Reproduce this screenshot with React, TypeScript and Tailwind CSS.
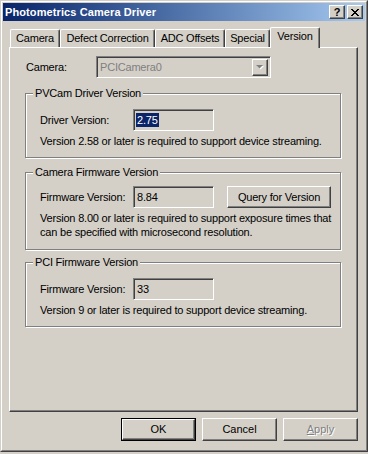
import React from "react";

const font = { fontFamily: '"Liberation Sans", Arial, sans-serif' };

function Sunken({ className = "", children }: { className?: string; children?: React.ReactNode }) {
  return (
    <div
      className={
        "border border-t-[#808080] border-l-[#808080] border-r-white border-b-white shadow-[inset_1px_1px_#404040,inset_-1px_-1px_#d4d0c8] bg-[#d4d0c8] " +
        className
      }
    >
      {children}
    </div>
  );
}

function Raised({ className = "", children }: { className?: string; children?: React.ReactNode }) {
  return (
    <div
      className={
        "border border-t-white border-l-white border-r-[#404040] border-b-[#404040] shadow-[inset_-1px_-1px_#808080] bg-[#d4d0c8] " +
        className
      }
    >
      {children}
    </div>
  );
}

function Group({ title, className = "", children }: { title: string; className?: string; children?: React.ReactNode }) {
  return (
    <div
      className={
        "relative ml-[15px] w-[316px] border border-[#808080] shadow-[inset_1px_1px_#fff,1px_1px_#fff] " + className
      }
    >
      <div className="absolute left-[7px] top-[-7px] px-[2px] bg-[#d4d0c8] leading-[13px] text-[11px] text-black whitespace-nowrap">
        {title}
      </div>
      {children}
    </div>
  );
}

function Tab({ label, w, selected = false }: { label: string; w: number; selected?: boolean }) {
  return (
    <div
      className={
        "flex justify-center bg-[#d4d0c8] border-l border-t border-r border-l-white border-t-white border-r-[#404040] shadow-[inset_-1px_0_#808080] rounded-tl-[2px] rounded-tr-[2px] text-[11px] text-black whitespace-nowrap " +
        (selected ? "relative z-10 h-[21px] mb-[-1px] pt-[2px] leading-[13px]" : "h-[18px] pt-[2px] leading-[13px]")
      }
      style={{ width: w }}
    >
      {label}
    </div>
  );
}

function EditBox({ value, selected = false }: { value: string; selected?: boolean }) {
  return (
    <Sunken className="w-[81px] h-[22px] pl-[2px] pt-[2px]">
      <span
        className={
          "inline-block px-[1px] leading-[14px] text-[11px] " +
          (selected ? "bg-[#0a246a] text-white" : "text-black")
        }
      >
        {value}
      </span>
    </Sunken>
  );
}

export default function App() {
  return (
    <div className="w-[368px] h-[454px] bg-[#d4d0c8] overflow-hidden" style={font}>
      <div className="w-[368px] h-[452px] border border-t-[#d4d0c8] border-l-[#d4d0c8] border-r-[#404040] border-b-[#404040]">
        <div className="w-full h-full border border-t-white border-l-white border-r-[#808080] border-b-[#808080] p-[1px] flex flex-col">
          {/* Title bar */}
          <div className="h-[18px] flex items-center bg-gradient-to-r from-[#0a246a] to-[#a6caf0] pl-[2px] pr-[2px]">
            <div className="flex-1 text-white font-bold text-[11px] leading-[18px] whitespace-nowrap tracking-[0.1px]">
              Photometrics Camera Driver
            </div>
            <Raised className="w-[16px] h-[14px] flex items-center justify-center text-[11px] font-bold leading-none text-black">
              ?
            </Raised>
            <Raised className="ml-[2px] w-[16px] h-[14px] flex items-center justify-center">
              <svg width="8" height="7" viewBox="0 0 8 7">
                <path d="M0 0h2v1h1v1h2v-1h1v-1h2v1h-1v1h-1v1h-1v1h1v1h1v1h1v1h-2v-1h-1v-1h-2v1h-1v1h-2v-1h1v-1h1v-1h1v-1h-1v-1h-1v-1h-1z" fill="#000" />
              </svg>
            </Raised>
          </div>

          {/* Tabs */}
          <div className="mt-[6px] ml-[7px] h-[20px] flex items-end tracking-[-0.2px]">
            <Tab label="Camera" w={50} />
            <Tab label="Defect Correction" w={95} />
            <Tab label="ADC Offsets" w={70} />
            <Tab label="Special" w={45} />
            <Tab label="Version" w={50} selected />
          </div>

          {/* Panel */}
          <div className="ml-[6px] w-[349px] h-[365px] border border-t-white border-l-white border-r-[#404040] border-b-[#404040] shadow-[inset_-1px_-1px_#808080] text-[11px] text-black tracking-[-0.2px]">
            {/* Camera row */}
            <div className="mt-[8px] ml-[16px] flex items-center h-[22px]">
              <div className="w-[70px] leading-[13px]">Camera:</div>
              <Sunken className="w-[175px] h-[22px] flex items-center pl-[3px] pr-[2px]">
                <div className="flex-1 text-[#808080] leading-[13px]">PCICamera0</div>
                <Raised className="w-[16px] h-[17px] flex items-center justify-center">
                  <svg width="8" height="5" viewBox="0 0 8 5">
                    <path d="M1 1h7l-3.5 3.5z" fill="#fff" />
                    <path d="M0 0h7l-3.5 3.5z" fill="#808080" />
                  </svg>
                </Raised>
              </Sunken>
            </div>

            {/* Group 1 */}
            <Group title="PVCam Driver Version" className="mt-[15px] h-[65px]">
              <div className="mt-[15px] ml-[14px] flex items-center">
                <div className="w-[93px] leading-[13px]">Driver Version:</div>
                <EditBox value="2.75" selected />
              </div>
              <div className="mt-[3px] ml-[14px] leading-[14px] whitespace-nowrap">
                Version 2.58 or later is required to support device streaming.
              </div>
            </Group>

            {/* Group 2 */}
            <Group title="Camera Firmware Version" className="mt-[14px] h-[78px]">
              <div className="mt-[13px] ml-[14px] flex items-center">
                <div className="w-[93px] leading-[13px]">Firmware Version:</div>
                <EditBox value="8.84" />
                <div className="ml-[13px] w-[104px] h-[22px] border border-t-white border-l-white border-r-[#404040] border-b-[#404040] shadow-[inset_-1px_-1px_#808080] flex items-center justify-center leading-[13px]">
                  Query for Version
                </div>
              </div>
              <div className="mt-[3px] ml-[14px] leading-[14px] whitespace-nowrap">
                Version 8.00 or later is required to support exposure times that
                <br />
                can be specified with microsecond resolution.
              </div>
            </Group>

            {/* Group 3 */}
            <Group title="PCI Firmware Version" className="mt-[12px] h-[65px]">
              <div className="mt-[15px] ml-[14px] flex items-center">
                <div className="w-[93px] leading-[13px]">Firmware Version:</div>
                <EditBox value="33" />
              </div>
              <div className="mt-[3px] ml-[14px] leading-[14px] whitespace-nowrap">
                Version 9 or later is required to support device streaming.
              </div>
            </Group>
          </div>

          {/* Buttons */}
          <div className="mt-[6px] pr-[7px] flex justify-end gap-[6px] text-[11px]">
            <div className="w-[75px] h-[23px] border border-black">
              <div className="w-full h-full border border-t-white border-l-white border-r-[#404040] border-b-[#404040] shadow-[inset_-1px_-1px_#808080] flex items-center justify-center leading-[13px] text-black">
                OK
              </div>
            </div>
            <Raised className="w-[75px] h-[23px] flex items-center justify-center leading-[13px] text-black">
              Cancel
            </Raised>
            <Raised className="w-[75px] h-[23px] flex items-center justify-center leading-[13px] text-[#808080] [text-shadow:1px_1px_#fff]">
              <span>
                <span className="underline">A</span>pply
              </span>
            </Raised>
          </div>
        </div>
      </div>
    </div>
  );
}
